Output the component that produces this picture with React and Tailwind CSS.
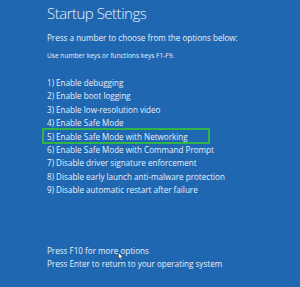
export default function App() {
  const items = [
    "1) Enable debugging",
    "2) Enable boot logging",
    "3) Enable low-resolution video",
    "4) Enable Safe Mode",
    "5) Enable Safe Mode with Networking",
    "6) Enable Safe Mode with Command Prompt",
    "7) Disable driver signature enforcement",
    "8) Disable early launch anti-malware protection",
    "9) Disable automatic restart after failure",
  ];
  return (
    <div
      className="relative w-[300px] h-[287px] overflow-hidden bg-[#1f67b1] text-[#e8f0fa] pl-[47px]"
      style={{ fontFamily: '"Open Sans", "Noto Sans", sans-serif' }}
    >
      <div className="pt-[2px] text-[15px] leading-[22px] font-light tracking-[-0.5px]">Startup Settings</div>
      <div className="mt-[8px] text-[8.1px] leading-[12px]">Press a number to choose from the options below:</div>
      <div className="mt-[7px] text-[6.6px] leading-[10px]">Use number keys or functions keys F1-F9.</div>
      <div className="mt-[15px] flex flex-col text-[8.1px] leading-[13.4px]">
        {items.map((t, i) => (
          <div key={i} className="relative">
            {i === 4 && (
              <div className="absolute left-[-5px] top-[-2px] w-[168px] h-[16px] border-2 border-[#2fb54a]" />
            )}
            <span>{t}</span>
          </div>
        ))}
      </div>
      <div className="mt-[47px] flex flex-col text-[8.1px] leading-[13.6px]">
        <div>Press F10 for more options</div>
        <div>Press Enter to return to your operating system</div>
      </div>
      <svg className="absolute left-[118px] top-[252px]" width="6" height="9" viewBox="0 0 6 9">
        <path d="M0.5 0.5 L0.5 7 L2 5.6 L3.2 8.3 L4.2 7.8 L3 5.2 L5 5.2 Z" fill="#fff" stroke="#223" strokeWidth="0.5" />
      </svg>
    </div>
  );
}
